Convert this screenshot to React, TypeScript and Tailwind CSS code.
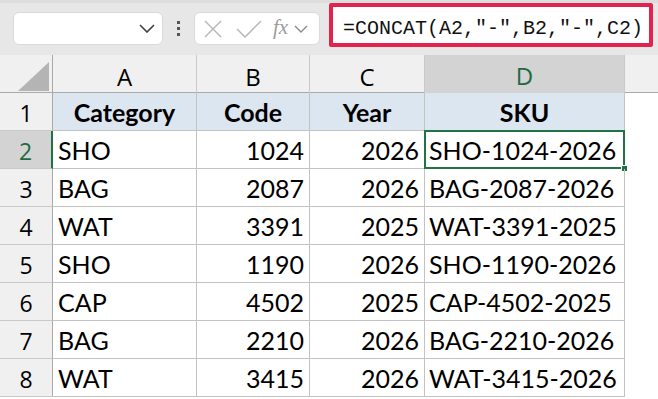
import React from "react";

const COLS = ["A", "B", "C", "D"];

const ROWS: [string, number, number][] = [
  ["SHO", 1024, 2026],
  ["BAG", 2087, 2026],
  ["WAT", 3391, 2025],
  ["SHO", 1190, 2026],
  ["CAP", 4502, 2025],
  ["BAG", 2210, 2026],
  ["WAT", 3415, 2026],
];

const GRID = "grid grid-cols-[53px_144px_113px_115px_200px_1fr]";
const CELL = "h-[38px] border-r border-b border-[#c3c3c3] flex items-center text-[25px] text-black pt-[3px]";

function Toolbar() {
  return (
    <div className="h-[55px] bg-[#e7e7e7] border-t-[3px] border-[#dedede] flex items-start relative">
      {/* name box */}
      <div className="mt-[9px] ml-[13px] w-[150px] h-[33px] bg-white rounded-[6px] border border-[#dadada] flex items-center justify-end pr-[7px]">
        <svg width="16" height="9" viewBox="0 0 16 9" fill="none">
          <path d="M1 1l7 7 7-7" stroke="#3f3f3f" strokeWidth="1.6" />
        </svg>
      </div>
      {/* dots */}
      <div className="mt-[18px] ml-[14px] flex flex-col gap-[3px]">
        <div className="w-[3px] h-[3px] bg-[#555]" />
        <div className="w-[3px] h-[3px] bg-[#555]" />
        <div className="w-[3px] h-[3px] bg-[#555]" />
      </div>
      {/* fx box */}
      <div className="mt-[9px] ml-[14px] w-[126px] h-[33px] bg-white rounded-[6px] border border-[#dadada] flex items-center pl-[8px]">
        <svg width="20" height="18" viewBox="0 0 20 18" fill="none">
          <path d="M2 1l16 16M18 1L2 17" stroke="#b5b5b5" strokeWidth="1.4" />
        </svg>
        <svg className="ml-[13px]" width="26" height="18" viewBox="0 0 26 18" fill="none">
          <path d="M1 9l8 8L25 1" stroke="#b5b5b5" strokeWidth="1.4" />
        </svg>
        <span className="ml-[11px] text-[21px] italic text-[#9c9c9c] leading-none pb-[2px]" style={{ fontFamily: '"Liberation Serif", serif' }}>
          fx
        </span>
        <svg className="ml-[6px]" width="14" height="8" viewBox="0 0 14 8" fill="none">
          <path d="M1 1l6 6 6-6" stroke="#8a8a8a" strokeWidth="1.4" />
        </svg>
      </div>
      {/* formula */}
      <div className="mt-0 ml-[9px] w-[324px] h-[44px] bg-white border-[4px] border-[#e3234b] rounded-[2px] flex items-center pl-[10px] pt-[7px]">
        <span className="text-[20px] text-[#111] leading-none" style={{ fontFamily: '"Liberation Mono", monospace' }}>
          =CONCAT(A2,"-",B2,"-",C2)
        </span>
      </div>
    </div>
  );
}

function ColumnHeader() {
  return (
    <div className={GRID + " bg-[#f0f0f0] h-[38px] border-b border-[#a9a9a9]"}>
      <div className="border-r border-[#a9a9a9] flex items-end justify-end pr-[3px] pb-[4px]">
        <svg width="31" height="29" viewBox="0 0 31 29">
          <polygon points="31,0 31,29 0,29" fill="#b4b4b4" />
        </svg>
      </div>
      {COLS.map((c) => {
        const sel = c === "D";
        return (
          <div
            key={c}
            className={
              "flex items-center justify-center text-[24px] pt-[3px] border-r border-[#c9c9c9] " +
              (sel ? "bg-[#d3d3d3] text-[#1e6b41] border-b-2 border-b-[#217346] -mb-px" : "text-black")
            }
            style={{ fontFamily: '"Open Sans", sans-serif' }}
          >
            {c}
          </div>
        );
      })}
      <div />
    </div>
  );
}

function RowNum({ n }: { n: number }) {
  const sel = n === 2;
  return (
    <div
      className={
        "h-[38px] flex items-center justify-center text-[23px] pt-[3px] border-b border-[#c9c9c9] " +
        (sel ? "bg-[#d3d3d3] text-[#1e6b41] border-r-2 border-r-[#217346]" : "bg-[#f0f0f0] text-black border-r border-r-[#a9a9a9]")
      }
      style={{ fontFamily: '"Open Sans", sans-serif' }}
    >
      {n}
    </div>
  );
}

export default function App() {
  return (
    <div className="w-[658px] h-[399px] overflow-hidden bg-white" style={{ fontFamily: 'Lato, "Liberation Sans", sans-serif' }}>
      <Toolbar />
      <ColumnHeader />
      {/* header row */}
      <div className={GRID}>
        <RowNum n={1} />
        {["Category", "Code", "Year", "SKU"].map((h) => (
          <div key={h} className={CELL + " bg-[#dce6f1] justify-center font-bold"}>
            {h}
          </div>
        ))}
        <div />
      </div>
      {ROWS.map((r, i) => {
        const n = i + 2;
        const sku = `${r[0]}-${r[1]}-${r[2]}`;
        return (
          <div key={n} className={GRID}>
            <RowNum n={n} />
            <div className={CELL + " pl-[5px]"}>{r[0]}</div>
            <div className={CELL + " justify-end pr-[5px]"}>{r[1]}</div>
            <div className={CELL + " justify-end pr-[5px]"}>{r[2]}</div>
            <div className={CELL + " pl-[4px] relative"}>
              {sku}
              {n === 2 && (
                <>
                  <div className="absolute -left-px -top-px right-[-1px] bottom-[-1px] border-2 border-[#217346]" />
                  <div className="absolute right-[-4px] bottom-[-4px] w-[7px] h-[7px] bg-[#217346] border border-white" />
                </>
              )}
            </div>
            <div />
          </div>
        );
      })}
    </div>
  );
}
